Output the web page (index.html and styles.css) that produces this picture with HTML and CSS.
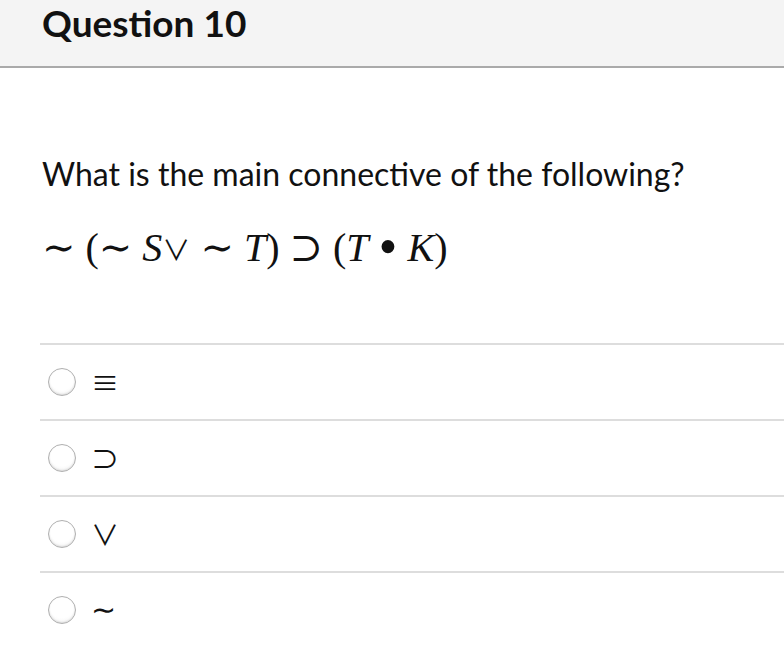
FILE: index.html
```html
<!DOCTYPE html>
<html>
<head>
<meta charset="utf-8">
<link rel="stylesheet" href="styles.css">
</head>
<body>
<div class="header">
  <h2 class="title">Question 10</h2>
</div>
<div class="content">
  <p class="question">What is the main connective of the following?</p>
  <p class="formula"><span class="op">∼</span> (<span class="op">∼</span> <i>S</i><span class="or">∨</span> <span class="op">∼</span> <i>T</i>) ⊃ (<i>T</i> <span class="dot">•</span> <i>K</i>)</p>
  <div class="answers">
    <div class="answer"><span class="radio"></span><span class="label">≡</span></div>
    <div class="answer"><span class="radio"></span><span class="label">⊃</span></div>
    <div class="answer"><span class="radio"></span><span class="label">∨</span></div>
    <div class="answer"><span class="radio"></span><span class="label label-tilde">∼</span></div>
  </div>
</div>
</body>
</html>
```

FILE: styles.css
```css
html, body {
  margin: 0;
  padding: 0;
  background: #ffffff;
  color: #111111;
  font-family: Lato, "Liberation Sans", sans-serif;
}
.header {
  height: 66px;
  background: #f4f4f4;
  border-bottom: 2px solid #aaaaaa;
  padding-left: 42px;
}
.title {
  margin: 0;
  font-size: 37px;
  font-weight: 700;
  line-height: 45px;
  color: #111;
}
.content {
  padding-left: 40px;
}
.question {
  margin: 87px 0 0 2px;
  font-size: 32px;
  line-height: 38px;
}
.formula {
  margin: 33px 0 0 2px;
  height: 44px;
  font-family: "Liberation Serif", "DejaVu Serif", serif;
  font-size: 40px;
  line-height: 44px;
  white-space: nowrap;
}
.formula i {
  font-style: italic;
}
.formula .or {
  font-family: "Noto Sans CJK JP", "DejaVu Sans", sans-serif;
  font-size: 28px;
  line-height: 0;
}
.formula .dot {
  font-size: 54px;
  line-height: 0;
  vertical-align: -4px;
}
.answers {
  margin-top: 73px;
}
.answer {
  height: 74px;
  border-top: 2px solid #dddddd;
  display: flex;
  align-items: center;
  padding-left: 8px;
}
.radio {
  width: 28px;
  height: 28px;
  border-radius: 50%;
  border: 1px solid #b0b0b0;
  box-sizing: border-box;
  background: radial-gradient(circle at 50% 35%, #ffffff 55%, #efefef 100%);
  box-shadow: inset 0 -1px 2px rgba(0,0,0,0.12);
}
.label {
  margin-left: 15px;
  font-family: "Noto Sans CJK JP", "DejaVu Sans", sans-serif;
  font-size: 28px;
  line-height: 28px;
  color: #111;
}
.label-tilde {
  font-family: "DejaVu Sans", sans-serif;
  font-size: 30px;
}
```
